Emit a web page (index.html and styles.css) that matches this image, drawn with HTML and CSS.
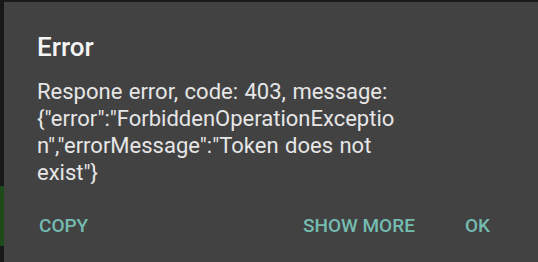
FILE: index.html
```html
<!DOCTYPE html>
<html>
<head>
<meta charset="utf-8">
<link rel="stylesheet" href="styles.css">
</head>
<body>
<div class="screen">
  <div class="edge"><span class="edge-green"></span></div>
  <div class="dialog">
    <div class="title">Error</div>
    <div class="message">Respone error, code: 403, message:<br>{"error":"ForbiddenOperationExceptio<br>n","errorMessage":"Token does not<br>exist"}</div>
    <div class="actions">
      <span class="btn copy">COPY</span>
      <span class="spacer"></span>
      <span class="btn">SHOW MORE</span>
      <span class="btn ok">OK</span>
    </div>
  </div>
</div>
</body>
</html>
```
FILE: styles.css
```css
html, body {
  margin: 0;
  padding: 0;
  background: #1b1b1d;
}
.screen {
  width: 538px;
  height: 262px;
  display: flex;
  overflow: hidden;
  font-family: Roboto, "Liberation Sans", sans-serif;
}
.edge {
  width: 4px;
  flex: none;
  background: #18181a;
  display: flex;
  flex-direction: column;
  justify-content: flex-end;
  padding-bottom: 16px;
  box-sizing: border-box;
}
.edge-green {
  height: 60px;
  background: #1f4a1a;
}
.dialog {
  flex: 1;
  margin-top: 2px;
  background: #424243;
  padding: 0 0 0 33px;
  display: flex;
  flex-direction: column;
}
.title {
  margin-top: 29px;
  font-size: 26px;
  font-weight: 500;
  line-height: 32px;
  color: #f4f4f4;
}
.message {
  margin-top: 15px;
  font-size: 22px;
  line-height: 27px;
  word-spacing: 1px;
  color: #e6e6e6;
}
.actions {
  display: flex;
  align-items: center;
  margin-top: 28px;
  padding-right: 48px;
}
.btn {
  font-size: 19px;
  font-weight: 500;
  color: #74bcb0;
  line-height: 24px;
}
.copy {
  margin-left: 2px;
}
.spacer {
  flex: 1;
}
.ok {
  margin-left: 50px;
}
```
